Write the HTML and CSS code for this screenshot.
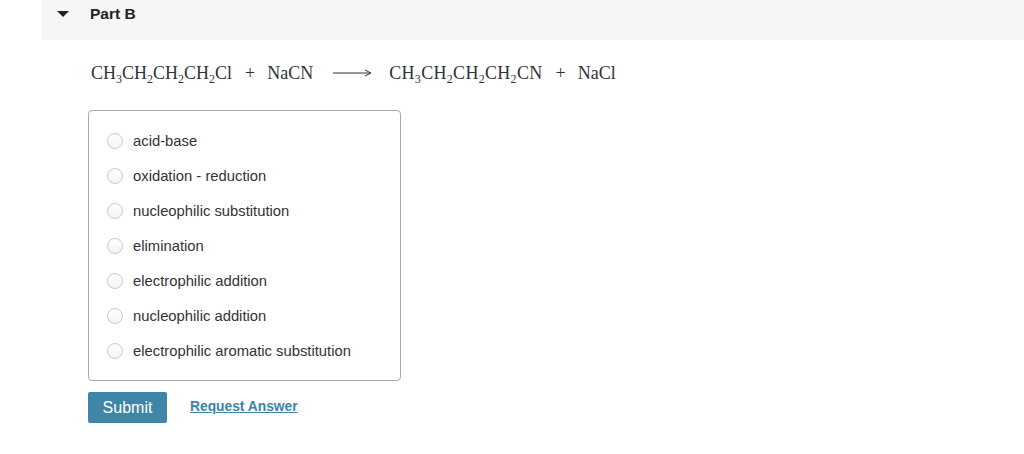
FILE: index.html
```html
<!DOCTYPE html>
<html lang="en">

<head>
    <meta charset="UTF-8">
    <title>Part B</title>
    <link rel="stylesheet" href="styles.css">
</head>

<body>
    <!-- Part header -->
    <div class="part-header">
        <span class="caret"></span>
        <span class="part-title">Part B</span>
    </div>

    <div class="part-body">
        <!-- Reaction equation -->
        <div class="equation">
            <span>CH<sub>3</sub>CH<sub>2</sub>CH<sub>2</sub>CH<sub>2</sub>Cl</span>
            <span class="plus">+</span>
            <span>NaCN</span>
            <svg class="arrow" width="39" height="10" viewBox="0 0 39 10">
                <line x1="0" y1="5" x2="37" y2="5" stroke="#333" stroke-width="1"/>
                <path d="M32 2 L38 5 L32 8" fill="none" stroke="#333" stroke-width="1"/>
            </svg>
            <span class="product">CH<sub>3</sub>CH<sub>2</sub>CH<sub>2</sub>CH<sub>2</sub>CN</span>
            <span class="plus">+</span>
            <span>NaCl</span>
        </div>

        <!-- Answer choices -->
        <div class="choices">
            <label class="choice"><span class="radio"></span>acid-base</label>
            <label class="choice"><span class="radio"></span>oxidation - reduction</label>
            <label class="choice"><span class="radio"></span>nucleophilic substitution</label>
            <label class="choice"><span class="radio"></span>elimination</label>
            <label class="choice"><span class="radio"></span>electrophilic addition</label>
            <label class="choice"><span class="radio"></span>nucleophilic addition</label>
            <label class="choice"><span class="radio"></span>electrophilic aromatic substitution</label>
        </div>

        <div class="actions">
            <button class="submit-btn" type="button">Submit</button>
            <a class="request-link" href="#">Request Answer</a>
        </div>
    </div>
</body>

</html>
```

FILE: styles.css
```css
body {
    margin: 0;
    font-family: 'Liberation Sans', Arial, sans-serif;
    color: #333;
    background-color: #fff;
}

/* Part header band */
.part-header {
    margin-left: 42px;
    height: 40px;
    background-color: #f6f6f6;
    display: flex;
    align-items: center;
    padding-bottom: 12px;
    box-sizing: border-box;
}

.caret {
    width: 0;
    height: 0;
    margin-left: 15px;
    border-left: 6px solid transparent;
    border-right: 6px solid transparent;
    border-top: 6px solid #222;
}

.part-title {
    margin-left: 21px;
    font-size: 15.5px;
    font-weight: bold;
    color: #222;
}

.part-body {
    padding-left: 88px;
}

/* Equation */
.equation {
    display: flex;
    align-items: center;
    margin-top: 21px;
    height: 24px;
    font-family: 'Liberation Serif', 'Times New Roman', serif;
    font-size: 18px;
    color: #333;
    padding-left: 3px;
}

.equation sub {
    font-size: 12px;
    vertical-align: -4px;
    line-height: 0;
}

.product {
    letter-spacing: 0.3px;
}

.plus {
    margin: 0 12px 0 13px;
}

.arrow {
    margin: 0 17px 0 20px;
}

/* Choices box */
.choices {
    margin-top: 25px;
    width: 311px;
    border: 1px solid #a9a9a9;
    border-radius: 4px;
    padding: 12px 0;
}

.choice {
    display: flex;
    align-items: center;
    height: 35px;
    font-size: 14.8px;
    color: #333;
    padding-left: 18px;
}

.radio {
    width: 14px;
    height: 14px;
    border: 1px solid #c9c9c9;
    border-radius: 50%;
    background: linear-gradient(#fff, #f4f4f4);
    margin-right: 10px;
}

/* Actions */
.actions {
    display: flex;
    align-items: center;
    margin-top: 11px;
}

.submit-btn {
    width: 79px;
    height: 31px;
    border: none;
    border-radius: 2px;
    background-color: #3f86a6;
    color: #fff;
    font-family: 'Liberation Sans', Arial, sans-serif;
    font-size: 16px;
    padding: 0;
}

.request-link {
    margin-left: 23px;
    margin-top: -2px;
    font-size: 13.8px;
    font-weight: bold;
    color: #3a84a6;
    text-decoration: underline;
}
```
